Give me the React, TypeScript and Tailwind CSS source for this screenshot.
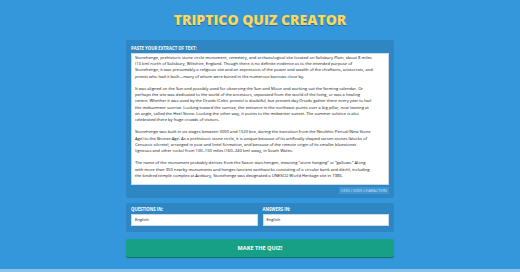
import React from "react";

const paragraphs: string[][] = [
  [
    "Stonehenge, prehistoric stone circle monument, cemetery, and archaeological site located on Salisbury Plain, about 8 miles",
    "(13 km) north of Salisbury, Wiltshire, England. Though there is no definite evidence as to the intended purpose of",
    "Stonehenge, it was presumably a religious site and an expression of the power and wealth of the chieftains, aristocrats, and",
    "priests who had it built—many of whom were buried in the numerous barrows close by.",
  ],
  [
    "It was aligned on the Sun and possibly used for observing the Sun and Moon and working out the farming calendar. Or",
    "perhaps the site was dedicated to the world of the ancestors, separated from the world of the living, or was a healing",
    "centre. Whether it was used by the Druids (Celtic priests) is doubtful, but present day Druids gather there every year to hail",
    "the midsummer sunrise. Looking toward the sunrise, the entrance in the northeast points over a big pillar, now leaning at",
    "an angle, called the Heel Stone. Looking the other way, it points to the midwinter sunset. The summer solstice is also",
    "celebrated there by huge crowds of visitors.",
  ],
  [
    "Stonehenge was built in six stages between 3000 and 1520 bce, during the transition from the Neolithic Period (New Stone",
    "Age) to the Bronze Age. As a prehistoric stone circle, it is unique because of its artificially shaped sarsen stones (blocks of",
    "Cenozoic silcrete), arranged in post and lintel formation, and because of the remote origin of its smaller bluestones",
    "(igneous and other rocks) from 100–150 miles (160–240 km) away, in South Wales.",
  ],
  [
    "The name of the monument probably derives from the Saxon stan-hengen, meaning \u201cstone hanging\u201d or \u201cgallows.\u201d Along",
    "with more than 350 nearby monuments and henges (ancient earthworks consisting of a circular bank and ditch), including",
    "the kindred temple complex at Avebury, Stonehenge was designated a UNESCO World Heritage site in 1986.",
  ],
];

export default function App() {
  return (
    <div
      className="w-[520px] h-[272px] flex flex-col bg-[#8cc3ea] overflow-hidden"
      style={{ fontFamily: '"Open Sans", "Liberation Sans", sans-serif' }}
    >
      <div className="h-[269px] bg-[#3597db] flex flex-col items-center">
        <h1 className="mt-[12px] text-[14px] leading-[16px] font-extrabold text-[#fbd75c] [text-shadow:0_1px_0_#1e6a9e]">
          TRIPTICO QUIZ CREATOR
        </h1>

        <div className="mt-[12px] w-[268px] rounded-[2px] bg-[#2e86c3] px-[5px] pt-[5px] pb-[4px] flex flex-col">
          <div className="text-[4.3px] leading-[6px] font-bold text-white uppercase">
            Paste your extract of text:
          </div>
          <div className="mt-[2px] h-[132px] bg-white border border-[#cfdbe4] px-[3px] pt-[1px] overflow-hidden text-[4.15px] leading-[6.2px] text-[#111]">
            {paragraphs.map((p, i) => (
              <div key={i} className={i > 0 ? "mt-[6.2px]" : ""}>
                {p.map((line, j) => (
                  <div key={j} className="whitespace-nowrap">
                    {line}
                  </div>
                ))}
              </div>
            ))}
          </div>
          <div className="mt-[2px] flex justify-end">
            <span className="bg-[#3e96d3] px-[2px] text-[3.9px] leading-[7px] text-[#c4e1f6] uppercase">
              2390 / 6000 characters
            </span>
          </div>
        </div>

        <div className="mt-[5px] w-[268px] rounded-[2px] bg-[#2e86c3] px-[5px] pt-[4px] pb-[6px] grid grid-cols-2 gap-x-[5px]">
          <div className="flex flex-col">
            <div className="text-[4.3px] leading-[5px] font-bold text-white uppercase">Questions in:</div>
            <div className="mt-[2px] h-[12px] bg-white border border-[#cfdbe4] px-[3px] flex items-center text-[4.15px] text-[#111]">
              English
            </div>
          </div>
          <div className="flex flex-col">
            <div className="text-[4.3px] leading-[5px] font-bold text-white uppercase">Answers in:</div>
            <div className="mt-[2px] h-[12px] bg-white border border-[#cfdbe4] px-[3px] flex items-center text-[4.15px] text-[#111]">
              English
            </div>
          </div>
        </div>

        <button className="mt-[7px] w-[268px] h-[18px] rounded-[2px] bg-[#17a085] shadow-[0_1px_1px_#0f6f5c] text-white font-bold text-[5.6px] uppercase flex items-center justify-center">
          Make the quiz!
        </button>
      </div>
    </div>
  );
}
